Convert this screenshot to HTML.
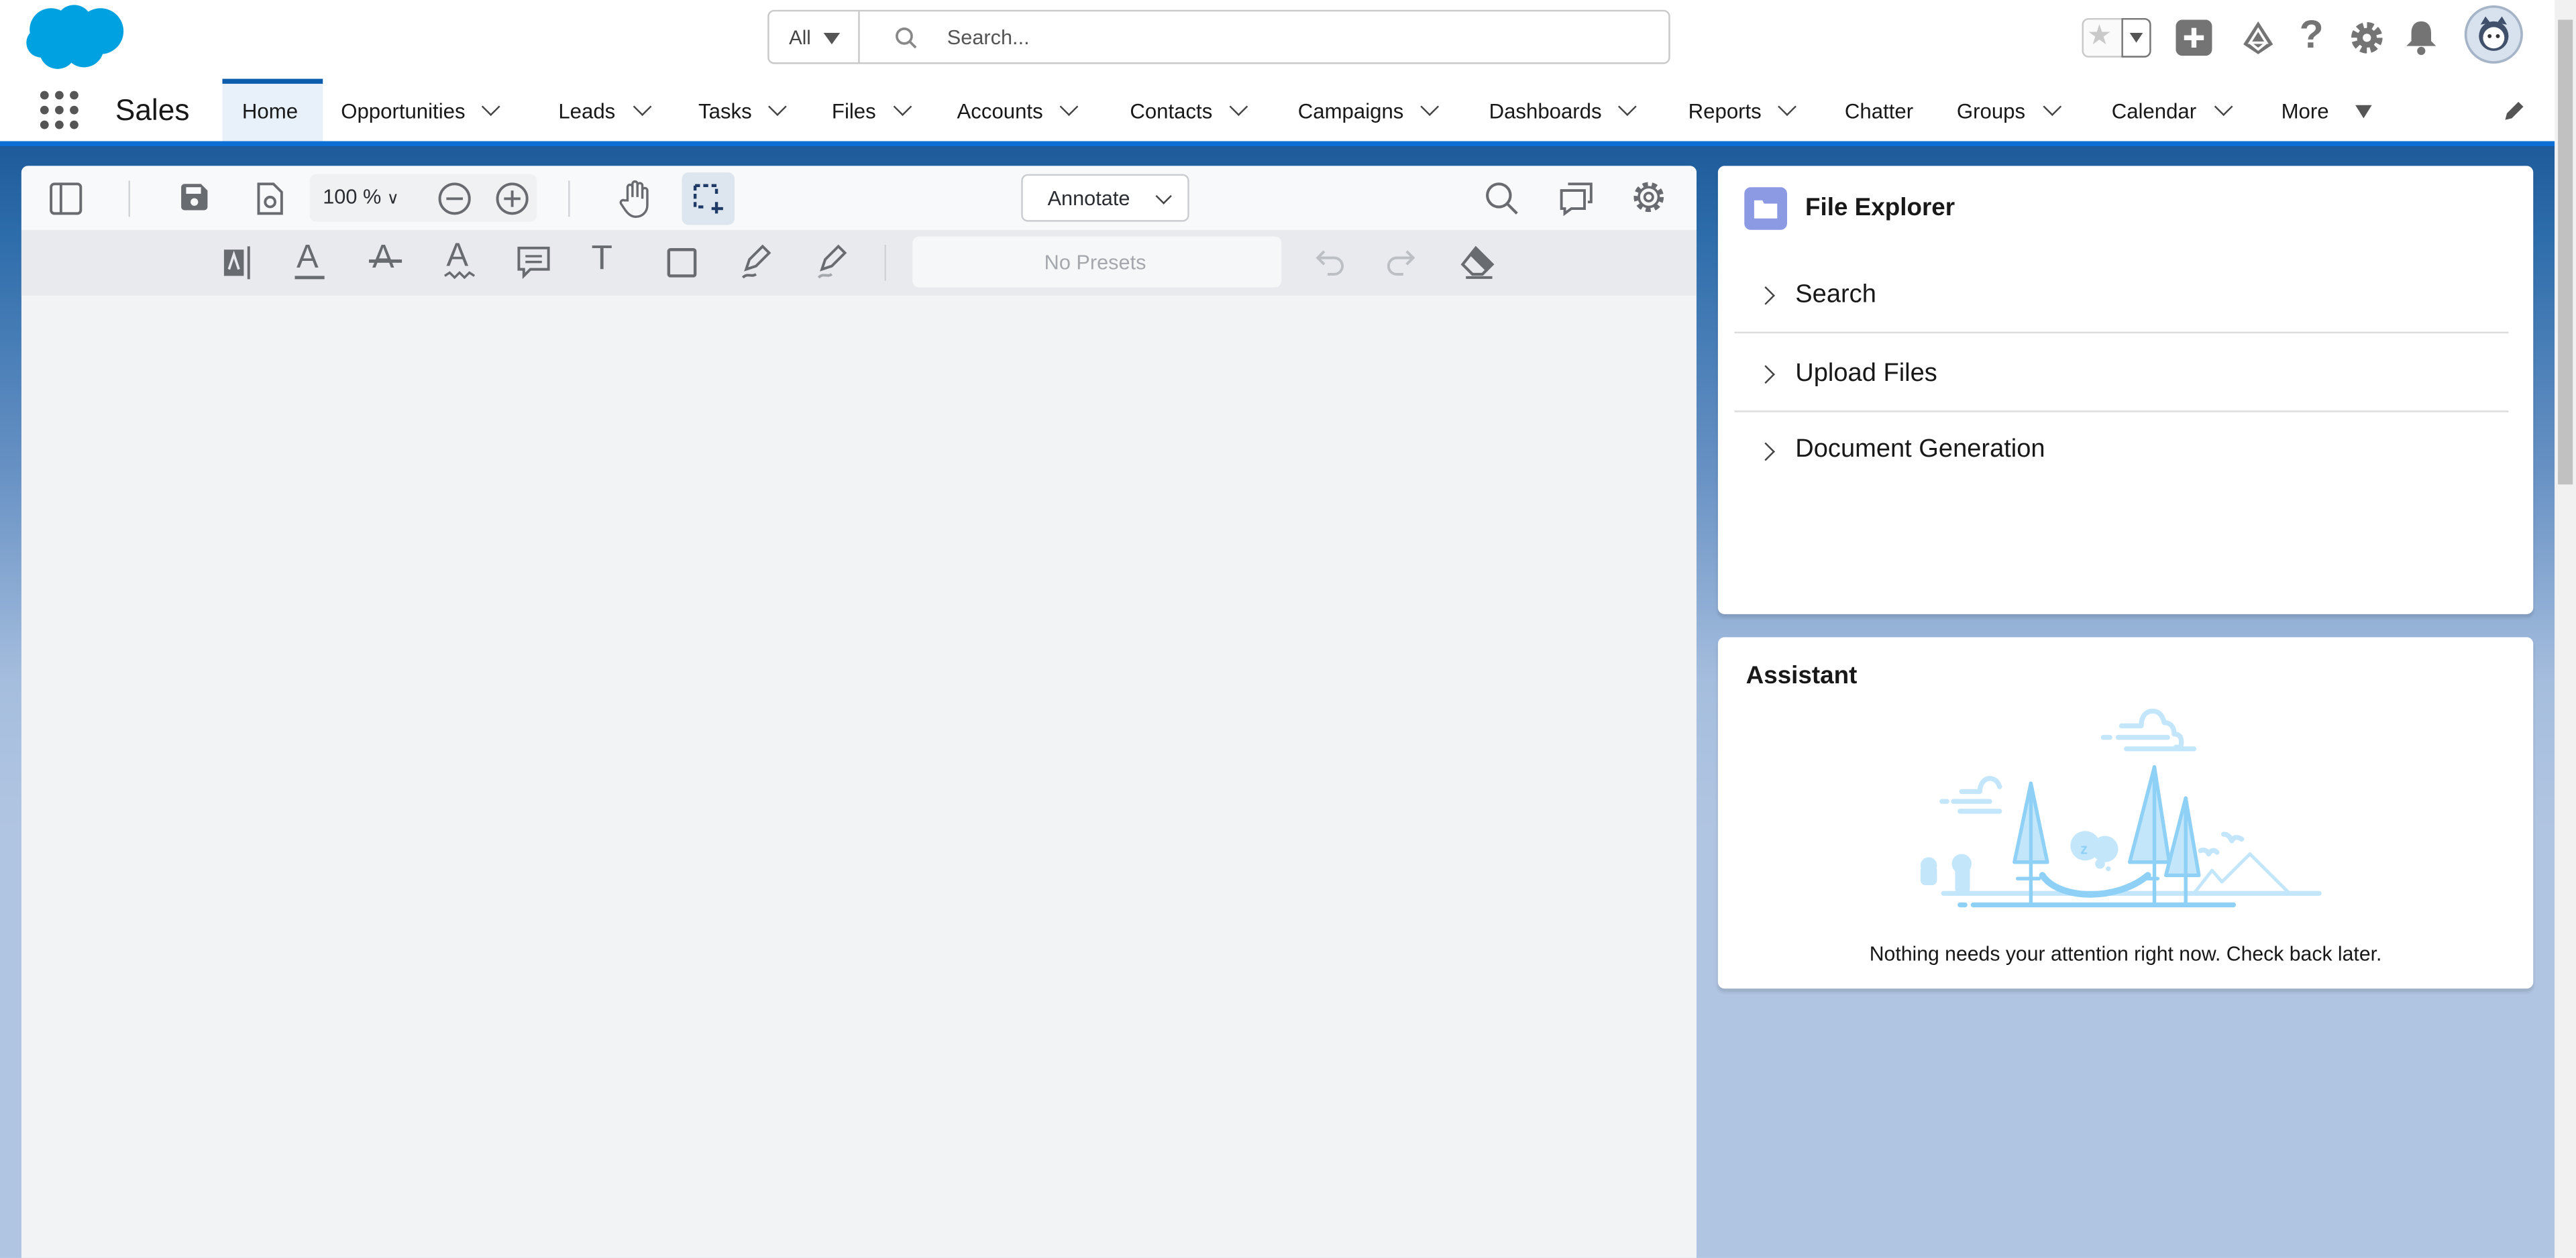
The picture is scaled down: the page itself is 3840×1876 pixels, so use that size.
<!DOCTYPE html>
<html><head><meta charset="utf-8"><style>
*{box-sizing:border-box;margin:0;padding:0}
html,body{width:3840px;height:1876px;overflow:hidden;background:#fff}
#w{position:absolute;left:0;top:0;width:1564px;height:766px;transform:scale(2.4553,2.449);transform-origin:0 0;font-family:"Liberation Sans",Arial,sans-serif;color:#181818}
.a{position:absolute}
.tab{position:absolute;top:61px;font-size:12.7px;color:#181818}
.chev{display:inline-block;width:8px;height:8px;border-right:1.5px solid #444;border-bottom:1.5px solid #444;transform:rotate(45deg);margin-left:12px;position:relative;top:-3px}
.ic{position:absolute}
</style></head><body><div id="w">
<svg class="a" style="left:15px;top:1px" width="62" height="42" viewBox="0 0 62 42"><g fill="#00a1e0"><circle cx="16" cy="17" r="13"/><circle cx="30" cy="13" r="11"/><circle cx="46" cy="18" r="14"/><circle cx="36" cy="28" r="12"/><circle cx="20" cy="30" r="11"/><circle cx="10" cy="25" r="9"/></g></svg>
<div class="a" style="left:466px;top:6px;width:548px;height:33px;border:1px solid #c9c9c9;border-radius:4px;background:#fff"></div>
<div class="a" style="left:521px;top:7px;width:1px;height:31px;background:#c9c9c9"></div>
<div class="a" style="left:479px;top:16px;font-size:12px;color:#444">All</div>
<div class="a" style="left:500px;top:20px;width:0;height:0;border-left:5px solid transparent;border-right:5px solid transparent;border-top:7px solid #555"></div>
<svg class="a" style="left:543px;top:16px" width="14" height="14" viewBox="0 0 14 14"><circle cx="6" cy="6" r="4.5" fill="none" stroke="#888" stroke-width="1.5"/><path d="M9 9l4 4" stroke="#888" stroke-width="1.5"/></svg>
<div class="a" style="left:575px;top:16px;font-size:12.5px;color:#555">Search...</div>
<div class="a" style="left:1264px;top:11px;width:42px;height:24px;border:1px solid #c9c9c9;border-radius:4px;background:#fafafa"></div>
<div class="a" style="left:1288px;top:11px;width:18px;height:24px;border:1px solid #777;border-radius:0 4px 4px 0;background:#fff"></div>
<div class="a" style="left:1267px;top:12px;font-size:17px;color:#c9c9c9">★</div>
<div class="a" style="left:1293px;top:20px;border-left:4px solid transparent;border-right:4px solid transparent;border-top:6px solid #555"></div>
<svg class="a" style="left:1321px;top:12px" width="22" height="22"><rect width="22" height="22" rx="4" fill="#747474"/><path d="M11 5v12M5 11h12" stroke="#fff" stroke-width="3"/></svg>
<svg class="a" style="left:1360px;top:12px" width="22" height="22" viewBox="0 0 22 22"><path d="M11 1L2 15l9 6 9-6z" fill="#747474"/><path d="M11 6l-5 8h10z M6 14l5 4 5-4" fill="none" stroke="#fff" stroke-width="1.5"/></svg>
<div class="a" style="left:1396px;top:8px;font-size:24px;color:#747474;font-weight:bold">?</div>
<svg class="a" style="left:1426px;top:12px" width="22" height="22" viewBox="0 0 22 22"><circle cx="11" cy="11" r="7" fill="none" stroke="#747474" stroke-width="5" stroke-dasharray="3.5 2"/><circle cx="11" cy="11" r="6" fill="#747474"/><circle cx="11" cy="11" r="2.5" fill="#fff"/></svg>
<svg class="a" style="left:1459px;top:11px" width="22" height="24" viewBox="0 0 22 24"><path d="M11 2c-4 0-6 3-6 7v5l-3 3h18l-3-3V9c0-4-2-7-6-7z" fill="#747474"/><circle cx="11" cy="20" r="2.5" fill="#747474"/></svg>
<svg class="a" style="left:1496px;top:3px" width="36" height="36" viewBox="0 0 36 36"><circle cx="18" cy="18" r="17" fill="#d8e2ef" stroke="#a6b4c8" stroke-width="1.5"/><circle cx="18" cy="19" r="9" fill="#41506b"/><circle cx="18" cy="20" r="6.5" fill="#fff"/><circle cx="15.5" cy="19" r="1.2" fill="#333"/><circle cx="20.5" cy="19" r="1.2" fill="#333"/><path d="M10 12l3-5 3 4M26 12l-3-5-3 4" fill="#41506b"/></svg>
<svg class="a" style="left:24px;top:55px" width="24" height="24"><g fill="#555"><circle cx="3" cy="3" r="2.6"/><circle cx="12" cy="3" r="2.6"/><circle cx="21" cy="3" r="2.6"/><circle cx="3" cy="12" r="2.6"/><circle cx="12" cy="12" r="2.6"/><circle cx="21" cy="12" r="2.6"/><circle cx="3" cy="21" r="2.6"/><circle cx="12" cy="21" r="2.6"/><circle cx="21" cy="21" r="2.6"/></g></svg>
<div class="a" style="left:70px;top:57px;font-size:18px">Sales</div>
<div class="a" style="left:135px;top:48px;width:61px;height:38px;background:#e8f0fa;border-top:3px solid #0b5cab"></div>
<div class="tab" style="left:147px">Home</div>
<div class="tab" style="left:207px">Opportunities<span class="chev"></span></div>
<div class="tab" style="left:339px">Leads<span class="chev"></span></div>
<div class="tab" style="left:424px">Tasks<span class="chev"></span></div>
<div class="tab" style="left:505px">Files<span class="chev"></span></div>
<div class="tab" style="left:581px">Accounts<span class="chev"></span></div>
<div class="tab" style="left:686px">Contacts<span class="chev"></span></div>
<div class="tab" style="left:788px">Campaigns<span class="chev"></span></div>
<div class="tab" style="left:904px">Dashboards<span class="chev"></span></div>
<div class="tab" style="left:1025px">Reports<span class="chev"></span></div>
<div class="tab" style="left:1120px">Chatter</div>
<div class="tab" style="left:1188px">Groups<span class="chev"></span></div>
<div class="tab" style="left:1282px">Calendar<span class="chev"></span></div>
<div class="tab" style="left:1385px">More</div>
<div class="a" style="left:1430px;top:64px;border-left:5px solid transparent;border-right:5px solid transparent;border-top:8px solid #555"></div>
<svg class="a" style="left:1519px;top:61px" width="14" height="14"><path d="M2 12l1-4 7-7 3 3-7 7z" fill="#555"/></svg>
<div class="a" style="left:0;top:86px;width:1551px;height:680px;background:linear-gradient(#1d5a9a 0px,#2e6dab 60px,#6791c4 200px,#a6bede 330px,#b0c5e1 420px)"></div>
<div class="a" style="left:0;top:86px;width:1551px;height:3px;background:#0b6fd6"></div>
<div class="a" style="left:1551px;top:0;width:13px;height:766px;background:#f1f1f1"></div>
<div class="a" style="left:1553px;top:12px;width:9px;height:283px;background:#c1c1c1"></div>
<div class="a" style="left:13px;top:101px;width:1017px;height:665px;background:#f2f3f5;border-radius:4px 4px 0 0"></div>
<div class="a" style="left:13px;top:101px;width:1017px;height:39px;background:#f8f9fa;border-radius:4px 4px 0 0"></div>
<div class="a" style="left:13px;top:140px;width:1017px;height:40px;background:#e8eaed"></div>
<svg class="a" style="left:30px;top:111px" width="20" height="20"><rect x="1" y="1" width="18" height="18" rx="2" fill="none" stroke="#686b70" stroke-width="1.6"/><path d="M7 1v18" stroke="#686b70" stroke-width="1.6"/></svg>
<div class="a" style="left:78px;top:110px;width:1px;height:22px;background:#d0d3d8"></div>
<svg class="a" style="left:109px;top:111px" width="18" height="18"><path d="M1 3a2 2 0 012-2h10l4 4v10a2 2 0 01-2 2H3a2 2 0 01-2-2z" fill="#686b70"/><rect x="4" y="3" width="9" height="4" fill="#f8f9fa"/><circle cx="9" cy="12" r="2.3" fill="#f8f9fa"/></svg>
<svg class="a" style="left:155px;top:111px" width="18" height="20"><path d="M2 1h9l5 5v13H2z" fill="none" stroke="#686b70" stroke-width="1.6"/><circle cx="9" cy="12" r="3" fill="none" stroke="#686b70" stroke-width="1.6"/></svg>
<div class="a" style="left:188px;top:106px;width:138px;height:29px;background:#eff1f3;border-radius:4px"></div>
<div class="a" style="left:196px;top:113px;font-size:12.5px;color:#2a2d31">100 % <span style="font-size:10px">∨</span></div>
<svg class="a" style="left:265px;top:110px" width="22" height="22"><circle cx="11" cy="11" r="9" fill="none" stroke="#686b70" stroke-width="1.6"/><path d="M6 11h10" stroke="#686b70" stroke-width="1.6"/></svg>
<svg class="a" style="left:300px;top:110px" width="22" height="22"><circle cx="11" cy="11" r="9" fill="none" stroke="#686b70" stroke-width="1.6"/><path d="M6 11h10M11 6v10" stroke="#686b70" stroke-width="1.6"/></svg>
<div class="a" style="left:345px;top:110px;width:1px;height:22px;background:#d0d3d8"></div>
<svg class="a" style="left:375px;top:109px" width="22" height="24" viewBox="0 0 22 24"><path d="M6 13V5a1.5 1.5 0 013 0v6V3a1.5 1.5 0 013 0v8V4a1.5 1.5 0 013 0v8-5a1.5 1.5 0 013 0v9c0 4-3 7-7 7-3 0-5-2-7-5l-2-3a1.5 1.5 0 012-2z" fill="none" stroke="#686b70" stroke-width="1.4"/></svg>
<div class="a" style="left:414px;top:105px;width:32px;height:32px;background:#dde5ee;border-radius:4px"></div>
<svg class="a" style="left:420px;top:111px" width="20" height="20"><path d="M2 2h13v7M2 2v13h7" fill="none" stroke="#1d3b66" stroke-width="1.8" stroke-dasharray="3 2"/><path d="M15 12v7M12 16h7" stroke="#1d3b66" stroke-width="1.8"/></svg>
<div class="a" style="left:620px;top:106px;width:102px;height:29px;background:#fff;border:1px solid #c9ccd0;border-radius:4px"></div>
<div class="a" style="left:636px;top:114px;font-size:12.5px;color:#2a2d31">Annotate</div>
<div class="a" style="left:703px;top:116px;width:7px;height:7px;border-right:1.5px solid #444;border-bottom:1.5px solid #444;transform:rotate(45deg)"></div>
<svg class="a" style="left:901px;top:110px" width="22" height="22"><circle cx="9" cy="9" r="7" fill="none" stroke="#686b70" stroke-width="1.7"/><path d="M14 14l6 6" stroke="#686b70" stroke-width="1.7"/></svg>
<svg class="a" style="left:946px;top:110px" width="22" height="22"><path d="M6 2h14v11h-2M2 6h14v11H8l-4 3v-3H2z" fill="none" stroke="#686b70" stroke-width="1.6"/></svg>
<svg class="a" style="left:990px;top:109px" width="22" height="22" viewBox="0 0 22 22"><circle cx="11" cy="11" r="7.5" fill="none" stroke="#686b70" stroke-width="3.2" stroke-dasharray="3 2.3"/><circle cx="11" cy="11" r="6" fill="none" stroke="#686b70" stroke-width="1.5"/><circle cx="11" cy="11" r="2.5" fill="none" stroke="#686b70" stroke-width="1.5"/></svg>
<svg class="a" style="left:135px;top:149px" width="20" height="22"><rect x="1" y="3" width="12" height="16" fill="#686b70"/><path d="M4 15l3-9 3 9" fill="none" stroke="#e8eaed" stroke-width="1.5"/><path d="M16 1v20" stroke="#686b70" stroke-width="1.6"/></svg>
<div class="a" style="left:180px;top:146px;font-size:20px;color:#686b70">A</div><div class="a" style="left:179px;top:168px;width:18px;height:2px;background:#686b70"></div>
<div class="a" style="left:226px;top:146px;font-size:20px;color:#686b70">A</div><div class="a" style="left:224px;top:158px;width:20px;height:1.6px;background:#686b70"></div>
<div class="a" style="left:271px;top:145px;font-size:20px;color:#686b70">A</div>
<svg class="a" style="left:269px;top:165px" width="20" height="6"><path d="M1 3l3-2 3 3 3-3 3 3 3-3 3 2" fill="none" stroke="#686b70" stroke-width="1.4"/></svg>
<svg class="a" style="left:314px;top:150px" width="20" height="20"><path d="M1 1h18v13H8l-4 4v-4H1z" fill="none" stroke="#686b70" stroke-width="1.6"/><path d="M5 6h10M5 9.5h10" stroke="#686b70" stroke-width="1.4"/></svg>
<div class="a" style="left:359px;top:146px;font-size:21px;color:#686b70;font-family:'Liberation Sans'">T</div>
<svg class="a" style="left:405px;top:151px" width="18" height="18"><rect x="1" y="1" width="16" height="16" rx="1" fill="none" stroke="#686b70" stroke-width="1.8"/></svg>
<svg class="a" style="left:449px;top:148px" width="20" height="22"><path d="M4 16l2-6 8-8 4 4-8 8z M2 21c3-3 5 0 8-2" fill="none" stroke="#686b70" stroke-width="1.6"/></svg>
<svg class="a" style="left:495px;top:148px" width="20" height="22"><path d="M4 16l2-6 8-8 4 4-8 8z" fill="none" stroke="#686b70" stroke-width="1.6"/><path d="M2 21c3-3 5 0 8-2" fill="none" stroke="#a4a8ad" stroke-width="1.6"/></svg>
<div class="a" style="left:537px;top:149px;width:1px;height:22px;background:#d0d3d8"></div>
<div class="a" style="left:554px;top:144px;width:224px;height:31px;background:#f6f7f8;border-radius:4px"></div>
<div class="a" style="left:634px;top:153px;font-size:12.5px;color:#a4a8ad">No Presets</div>
<svg class="a" style="left:797px;top:150px" width="20" height="20"><path d="M4 7h9a5 5 0 010 10H9M7 3L3 7l4 4" fill="none" stroke="#bcc0c5" stroke-width="1.6"/></svg>
<svg class="a" style="left:841px;top:150px" width="20" height="20"><path d="M16 7H7a5 5 0 000 10h4M13 3l4 4-4 4" fill="none" stroke="#bcc0c5" stroke-width="1.6"/></svg>
<svg class="a" style="left:886px;top:149px" width="22" height="22"><path d="M10 2l10 10-6 6H8l-6-6z" fill="none" stroke="#686b70" stroke-width="1.7"/><path d="M6 6l10 10 4-4L10 2z" fill="#686b70"/><path d="M4 20h16" stroke="#686b70" stroke-width="1.6"/></svg>
<div class="a" style="left:1043px;top:101px;width:495px;height:273px;background:#fff;border-radius:4px;box-shadow:0 2px 2px rgba(0,0,0,.12)"></div>
<svg class="a" style="left:1059px;top:114px" width="26" height="26"><rect width="26" height="26" rx="4" fill="#8b9ae3"/><path d="M6 8h5l1 2h8v9H6z" fill="#fff"/></svg>
<div class="a" style="left:1096px;top:118px;font-size:15px;font-weight:bold">File Explorer</div>
<div class="a" style="left:1068px;top:176px;width:8px;height:8px;border-right:1.5px solid #444;border-top:1.5px solid #444;transform:rotate(45deg)"></div>
<div class="a" style="left:1090px;top:171px;font-size:15.5px;color:#181818">Search</div>
<div class="a" style="left:1053px;top:202px;width:470px;height:1px;background:#dcdcdc"></div>
<div class="a" style="left:1068px;top:224px;width:8px;height:8px;border-right:1.5px solid #444;border-top:1.5px solid #444;transform:rotate(45deg)"></div>
<div class="a" style="left:1090px;top:219px;font-size:15.5px;color:#181818">Upload Files</div>
<div class="a" style="left:1053px;top:250px;width:470px;height:1px;background:#dcdcdc"></div>
<div class="a" style="left:1068px;top:271px;width:8px;height:8px;border-right:1.5px solid #444;border-top:1.5px solid #444;transform:rotate(45deg)"></div>
<div class="a" style="left:1090px;top:265px;font-size:15.5px;color:#181818">Document Generation</div>
<div class="a" style="left:1043px;top:388px;width:495px;height:214px;background:#fff;border-radius:4px;box-shadow:0 2px 2px rgba(0,0,0,.12)"></div>
<div class="a" style="left:1060px;top:403px;font-size:15px;font-weight:bold">Assistant</div>
<svg class="a" style="left:1160px;top:430px" width="260" height="130" viewBox="0 0 260 130" fill="none" stroke-linecap="round" stroke-linejoin="round">
<g stroke="#c4e6fb" stroke-width="3"><path d="M128 12h12c0-6 3-9 7-9s6 3 7 7c4 0 6 3 6 7 4 0 5 3 4 8h-3M117 19h4M126 19h30M131 26h41"/><path d="M31 52h11c0-5 3-8 6-8s5 2 6 5M19 58h3M26 58h22M30 64h24"/><path d="M20 114h228"/><path d="M172 114l11-14 6 7 17-17 24 24" stroke-width="2"/><path d="M190 78c3 0 4 2 5 4 1-2 3-3 6-1M176 88c2-1 4 0 5 2 1-2 3-3 5-1"/></g>
<g fill="#c4e6fb"><circle cx="106" cy="85" r="9"/><circle cx="118" cy="87" r="8"/><circle cx="115" cy="96" r="3"/><circle cx="120" cy="99" r="1.5"/></g>
<text x="103" y="90" font-size="9" fill="#8fd1f6" font-family="Liberation Sans" font-weight="bold">z</text>
<g stroke="#8fd1f6" stroke-width="2.2" fill="#c4e6fb"><path d="M73 47l-10 48h20z"/><path d="M148 37l-15 58h24z"/><path d="M167 56l-12 47h20z"/></g>
<g stroke="#8fd1f6" stroke-width="2.2"><path d="M73 47v74M148 37v84M167 56v65M65 105h13M140 105h10"/></g>
<path d="M80 103c10 15 45 16 64 0" stroke="#8fd1f6" stroke-width="4"/>
<path d="M30 121h3M38 121h158" stroke="#8fd1f6" stroke-width="3"/>
<g fill="#c4e6fb"><circle cx="11" cy="97" r="5"/><rect x="6" y="97" width="10" height="12" rx="3"/><circle cx="31" cy="96" r="6"/><rect x="27" y="96" width="9" height="18" rx="3"/></g>
</svg>
<div class="a" style="left:1043px;top:574px;width:495px;text-align:center;font-size:12.3px;color:#181818">Nothing needs your attention right now. Check back later.</div>
</div></body></html>
